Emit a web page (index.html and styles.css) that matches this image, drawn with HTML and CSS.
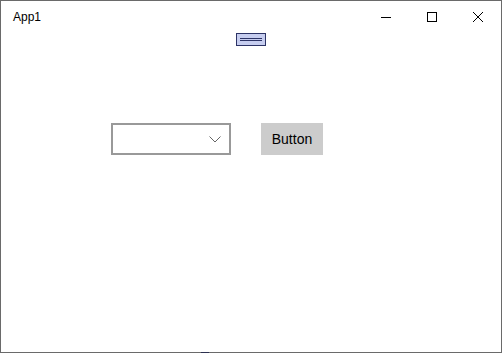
FILE: index.html
```html
<!DOCTYPE html>
<html lang="en">
<head>
    <meta charset="UTF-8">
    <meta name="viewport" content="width=device-width, initial-scale=1.0">
    <title>App1</title>
    <link rel="stylesheet" href="styles.css">
</head>
<body>
    <div class="window">
        <div class="titlebar">
            <span class="title">App1</span>
            <div class="controls">
                <div class="ctl">
                    <svg width="10" height="10" viewBox="0 0 10 10"><path d="M0 5.5H10" stroke="#000" stroke-width="1"/></svg>
                </div>
                <div class="ctl">
                    <svg width="10" height="10" viewBox="0 0 10 10"><rect x="0.5" y="0.5" width="9" height="9" fill="none" stroke="#000" stroke-width="1"/></svg>
                </div>
                <div class="ctl">
                    <svg width="10" height="10" viewBox="0 0 10 10"><path d="M0 0L10 10M10 0L0 10" stroke="#000" stroke-width="1"/></svg>
                </div>
            </div>
        </div>
        <div class="content">
            <div class="handle"><span></span><span></span></div>
            <div class="row">
                <div class="combo">
                    <svg width="12" height="7" viewBox="0 0 12 7"><path d="M0.5 0.5L6 6L11.5 0.5" fill="none" stroke="#666" stroke-width="1"/></svg>
                </div>
                <button class="btn">Button</button>
            </div>
        </div>
        <div class="mark"></div>
    </div>
</body>
</html>
```
FILE: styles.css
```css
body{
    margin: 0;
    font-family: "Liberation Sans", Arial, sans-serif;
}
.window{
    position: relative;
    box-sizing: border-box;
    width: 502px;
    height: 353px;
    border: 1px solid #6a6a6a;
    background-color: white;
}
.titlebar{
    display: flex;
    align-items: center;
    height: 31px;
}
.title{
    padding-left: 12px;
    font-size: 12px;
    color: #000;
    flex: 1;
}
.controls{
    display: flex;
    height: 100%;
}
.ctl{
    width: 46px;
    display: flex;
    align-items: center;
    justify-content: center;
}
.content{
    display: flex;
    flex-direction: column;
}
.handle{
    align-self: center;
    box-sizing: border-box;
    width: 30px;
    height: 13px;
    margin-top: 1px;
    border: 1px solid #2c3366;
    background-color: #c6cdef;
    display: flex;
    flex-direction: column;
    justify-content: center;
    gap: 1px;
    padding: 0 3px;
    margin-left: -1px;
}
.handle span{
    height: 1px;
    background-color: #2c3366;
}
.row{
    display: flex;
    gap: 30px;
    margin-top: 77px;
    padding-left: 110px;
}
.combo{
    box-sizing: border-box;
    width: 120px;
    height: 32px;
    border: 2px solid #999;
    display: flex;
    align-items: center;
    justify-content: flex-end;
    padding-right: 8px;
}
.btn{
    width: 62px;
    height: 32px;
    border: none;
    background-color: #cccccc;
    font-family: "Liberation Sans", Arial, sans-serif;
    font-size: 14px;
    color: #000;
    padding: 0;
}
.mark{
    position: absolute;
    left: 200px;
    bottom: -1px;
    width: 8px;
    height: 1px;
    background-color: #2c3050;
}
```
